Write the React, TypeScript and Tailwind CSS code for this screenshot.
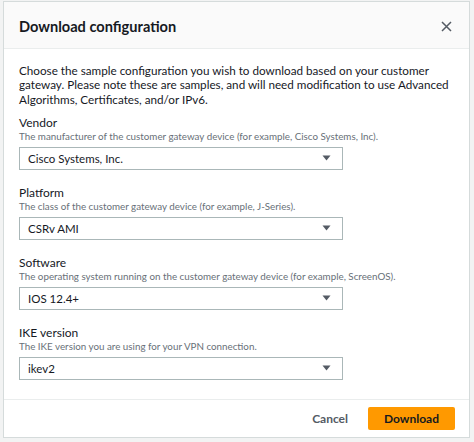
import React from "react";

const font = { fontFamily: "Lato, 'Noto Sans', sans-serif" };

function Caret() {
  return (
    <svg width="9" height="6" viewBox="0 0 9 6" className="shrink-0">
      <path d="M0.5 0.5 H8.5 L4.5 5.5 Z" fill="#545b64" />
    </svg>
  );
}

function Field({ label, desc, value }: { label: string; desc: string; value: string }) {
  return (
    <div className="flex flex-col">
      <div className="text-[12px] leading-[14px] text-[#16191f]">{label}</div>
      <div className="text-[9.8px] leading-[13px] text-[#687078]">{desc}</div>
      <div className="mt-[4px] flex h-[23px] w-[324px] items-center justify-between border border-[#aab7b8] bg-white pl-[8px] pr-[11px]">
        <span className="text-[11.5px] text-[#16191f]">{value}</span>
        <Caret />
      </div>
    </div>
  );
}

export default function App() {
  return (
    <div style={font} className="h-[442px] w-[474px] overflow-hidden bg-[#f2f3f3] pl-[3px] pr-[4px] pt-[1px]">
      <div className="flex h-[437px] flex-col border border-[#d5dbdb] bg-white">
        <div className="flex h-[47px] shrink-0 items-center justify-between border-b border-[#eaeded] bg-[#fafafa] pl-[15px] pr-[17px] pt-[3px]">
          <span className="text-[14.6px] font-bold text-[#16191f]">Download configuration</span>
          <svg width="11" height="11" viewBox="0 0 11 11">
            <path d="M1 1 L10 10 M10 1 L1 10" stroke="#545b64" strokeWidth="1.5" />
          </svg>
        </div>
        <div className="flex flex-1 flex-col pl-[15px] pt-[14px]">
          <p className="text-[11.7px] leading-[14.3px] text-[#16191f]">
            Choose the sample configuration you wish to download based on your customer gateway. Please note these are samples, and will need modification to use Advanced Algorithms, Certificates, and/or IPv6.
          </p>
          <div className="mt-[10px] flex flex-col gap-[16px]">
            <Field label="Vendor" desc="The manufacturer of the customer gateway device (for example, Cisco Systems, Inc)." value="Cisco Systems, Inc." />
            <Field label="Platform" desc="The class of the customer gateway device (for example, J-Series)." value="CSRv AMI" />
            <Field label="Software" desc="The operating system running on the customer gateway device (for example, ScreenOS)." value="IOS 12.4+" />
            <Field label="IKE version" desc="The IKE version you are using for your VPN connection." value="ikev2" />
          </div>
        </div>
        <div className="flex h-[38px] shrink-0 items-center justify-end gap-[20px] border-t border-[#eaeded] pr-[14px]">
          <button className="text-[12px] font-bold text-[#545b64]">Cancel</button>
          <button className="h-[23px] w-[87px] rounded-[2px] bg-[#ff9900] text-[12px] font-bold text-[#16191f]">Download</button>
        </div>
      </div>
    </div>
  );
}
